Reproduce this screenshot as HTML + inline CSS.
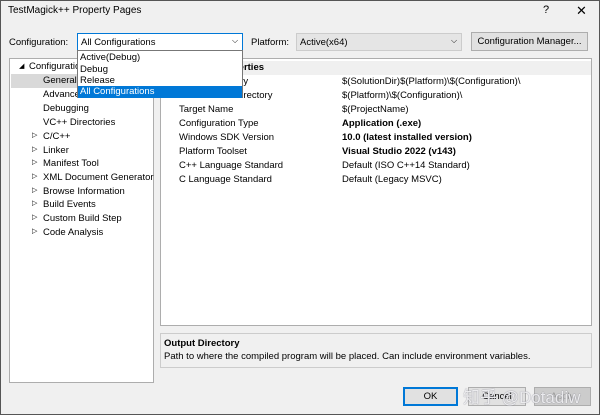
<!DOCTYPE html><html><head><style>
body{margin:0;width:600px;height:415px;overflow:hidden;background:#f0f0f0;font-family:"Liberation Sans",sans-serif;font-size:9.5px;color:#000;position:relative}
.a{position:absolute;white-space:nowrap}
.box{position:absolute;background:#fff;border:1px solid #adadad;box-sizing:border-box}
.btn{position:absolute;border:1px solid #adadad;background:#e1e1e1;box-sizing:border-box;text-align:center;line-height:17px}
.row{position:absolute;left:0;width:100%;height:14px;line-height:14px}
</style></head><body>
<div class="a" style="left:0;top:0;width:600px;height:415px;border:1px solid #555;box-sizing:border-box"></div>
<div class="a" style="left:8px;top:5px;font-size:10px">TestMagick++ Property Pages</div>
<div class="a" style="left:543px;top:4px;font-size:11px">?</div>
<div class="a" style="left:576px;top:3px;font-size:13px">✕</div>
<div class="a" style="left:9px;top:37px">Configuration:</div>
<div class="box" style="left:77px;top:33px;width:166px;height:18px;border-color:#0078d7"><span class="a" style="left:3px;top:3px">All Configurations</span><span class="a" style="left:154px;top:2px;font-size:8px">⌵</span></div>
<div class="a" style="left:251px;top:37px">Platform:</div>
<div class="box" style="left:296px;top:33px;width:166px;height:18px;background:#e5e5e5;border-color:#ccc"><span class="a" style="left:3px;top:3px">Active(x64)</span><span class="a" style="left:154px;top:2px;font-size:8px">⌵</span></div>
<div class="btn" style="left:471px;top:32px;width:117px;height:19px">Configuration Manager...</div>

<div class="box" style="left:9px;top:58px;width:145px;height:325px">
<div class="a" style="left:9px;top:3px;font-size:7px">◢</div>
<div class="a" style="left:19px;top:2px">Configuration Properties</div>
<div class="a" style="left:1px;top:15px;width:141px;height:14px;background:#d9d9d9"></div>
<div class="a" style="left:33px;top:16px">General</div>
<div class="a" style="left:33px;top:30px">Advanced</div>
<div class="a" style="left:33px;top:44px">Debugging</div>
<div class="a" style="left:33px;top:58px">VC++ Directories</div>
<div class="a" style="left:22px;top:72px;font-size:7px">▷</div><div class="a" style="left:33px;top:72px">C/C++</div>
<div class="a" style="left:22px;top:86px;font-size:7px">▷</div><div class="a" style="left:33px;top:86px">Linker</div>
<div class="a" style="left:22px;top:99px;font-size:7px">▷</div><div class="a" style="left:33px;top:99px">Manifest Tool</div>
<div class="a" style="left:22px;top:113px;font-size:7px">▷</div><div class="a" style="left:33px;top:113px">XML Document Generator</div>
<div class="a" style="left:22px;top:127px;font-size:7px">▷</div><div class="a" style="left:33px;top:127px">Browse Information</div>
<div class="a" style="left:22px;top:140px;font-size:7px">▷</div><div class="a" style="left:33px;top:140px">Build Events</div>
<div class="a" style="left:22px;top:154px;font-size:7px">▷</div><div class="a" style="left:33px;top:154px">Custom Build Step</div>
<div class="a" style="left:22px;top:168px;font-size:7px">▷</div><div class="a" style="left:33px;top:168px">Code Analysis</div>
</div>

<div class="box" style="left:160px;top:58px;width:432px;height:268px">
<div class="a" style="left:8px;top:2px;width:422px;height:14px;background:#f0f0f0"></div>
<div class="a" style="left:18px;top:3px;font-weight:bold">General Properties</div>
<div style="position:absolute;left:8px;top:16px;width:422px">
<div class="row" style="top:0"><span class="a" style="left:10px">Output Directory</span><span class="a" style="left:173px">$(SolutionDir)$(Platform)\$(Configuration)\</span></div>
<div class="row" style="top:14px"><span class="a" style="left:10px">Intermediate Directory</span><span class="a" style="left:173px">$(Platform)\$(Configuration)\</span></div>
<div class="row" style="top:28px"><span class="a" style="left:10px">Target Name</span><span class="a" style="left:173px">$(ProjectName)</span></div>
<div class="row" style="top:42px"><span class="a" style="left:10px">Configuration Type</span><span class="a" style="left:173px;font-weight:bold">Application (.exe)</span></div>
<div class="row" style="top:56px"><span class="a" style="left:10px">Windows SDK Version</span><span class="a" style="left:173px;font-weight:bold">10.0 (latest installed version)</span></div>
<div class="row" style="top:70px"><span class="a" style="left:10px">Platform Toolset</span><span class="a" style="left:173px;font-weight:bold">Visual Studio 2022 (v143)</span></div>
<div class="row" style="top:84px"><span class="a" style="left:10px">C++ Language Standard</span><span class="a" style="left:173px">Default (ISO C++14 Standard)</span></div>
<div class="row" style="top:98px"><span class="a" style="left:10px">C Language Standard</span><span class="a" style="left:173px">Default (Legacy MSVC)</span></div>
</div></div>

<div class="box" style="left:77px;top:50px;width:166px;height:48px;border-color:#777">
<div class="a" style="left:2px;top:1px">Active(Debug)</div>
<div class="a" style="left:2px;top:13px">Debug</div>
<div class="a" style="left:2px;top:24px">Release</div>
<div class="a" style="left:0;top:35px;width:164px;height:12px;background:#0078d7;color:#fff"><span style="margin-left:2px">All Configurations</span></div>
</div>

<div class="box" style="left:160px;top:333px;width:432px;height:35px;background:#f0f0f0;border-color:#ccc">
<div class="a" style="left:3px;top:4px;font-weight:bold">Output Directory</div>
<div class="a" style="left:3px;top:17px">Path to where the compiled program will be placed. Can include environment variables.</div>
</div>
<div class="btn" style="left:403px;top:387px;width:55px;height:19px;border:2px solid #0078d7;line-height:15px">OK</div>
<div class="btn" style="left:468px;top:387px;width:58px;height:19px">Cancel</div>
<div class="btn" style="left:534px;top:387px;width:57px;height:19px;color:#999;background:#ccc">Apply</div>
<div class="a" style="left:463px;top:383px;font-size:17px;color:rgba(255,255,255,0.85);text-shadow:0 0 1px #667;font-family:'Liberation Sans','Noto Sans CJK SC',sans-serif">知乎 @Dotadiw</div>
</body></html>
